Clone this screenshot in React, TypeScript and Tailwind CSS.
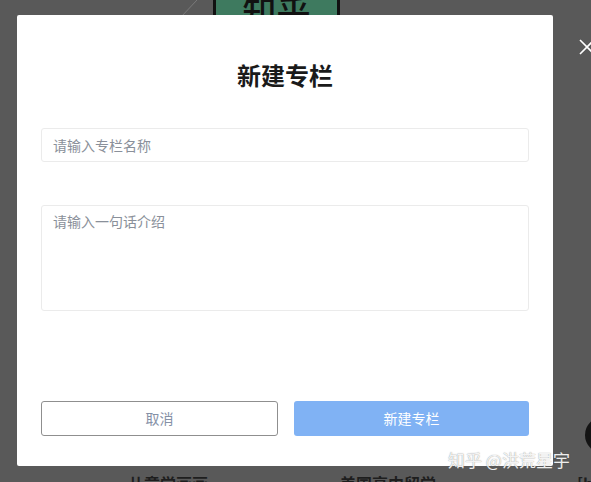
import React from "react";

const font = { fontFamily: '"Noto Sans CJK SC", "Noto Sans", sans-serif' };

export default function App() {
  return (
    <div
      className="relative w-[591px] h-[482px] overflow-hidden bg-[#595959] pt-[15px] pl-[17px]"
      style={font}
    >
      {/* backdrop content */}
      <svg className="absolute left-[178px] top-0" width="22" height="20" viewBox="0 0 22 20">
        <line x1="19" y1="0" x2="3" y2="17" stroke="#7a7a7a" strokeWidth="1" />
      </svg>
      <div className="absolute left-[213px] top-[-30px] w-[127px] h-[60px] bg-[#3e7a5f] border-x-[3px] border-[#111] flex justify-center items-end">
        <span className="text-[34px] leading-[34px] text-[#111] font-medium mb-[2px]">知乎</span>
      </div>
      <div className="absolute left-[128px] top-[473px] text-[16px] leading-[20px] font-bold text-[#1e1e1e] whitespace-nowrap">
        儿童学画画
      </div>
      <div className="absolute left-[340px] top-[473px] text-[16px] leading-[20px] font-bold text-[#1e1e1e] whitespace-nowrap">
        美国高中留学
      </div>
      <div className="absolute left-[577px] top-[473px] text-[16px] leading-[20px] font-bold text-[#1e1e1e] whitespace-nowrap">
        [b
      </div>
      <div className="absolute left-[585px] top-[417px] w-[36px] h-[36px] rounded-full bg-[#141414]" />

      {/* close */}
      <svg className="absolute left-[579px] top-[39px]" width="16" height="16" viewBox="0 0 16 16">
        <path d="M1 1 L15 15 M15 1 L1 15" stroke="#ffffff" strokeWidth="1.6" fill="none" />
      </svg>

      {/* modal */}
      <div className="relative z-10 w-[536px] bg-white rounded-[2px] px-6 pt-[44px] pb-[30px] flex flex-col">
        <h1 className="text-center text-[24px] leading-[32px] font-bold text-[#1a1a1a]">新建专栏</h1>
        <div className="mt-[37px] h-[34px] border border-[#ebebeb] rounded-[3px] px-[11px] flex items-center text-[14px] text-[#8a909a]">
          请输入专栏名称
        </div>
        <div className="mt-[43px] h-[106px] border border-[#ebebeb] rounded-[3px] px-[11px] pt-[5px] text-[14px] leading-[20px] text-[#8a909a]">
          请输入一句话介绍
        </div>
        <div className="mt-[90px] flex gap-4">
          <div className="flex-1 h-[35px] border border-[#8f8f8f] rounded-[3px] flex items-center justify-center text-[14px] text-[#8590a6]">
            取消
          </div>
          <div className="flex-1 h-[35px] bg-[#80b2f4] rounded-[3px] flex items-center justify-center text-[14px] text-white">
            新建专栏
          </div>
        </div>
      </div>

      {/* watermark */}
      <div
        className="absolute z-20 left-[448px] top-[449px] text-[17px] leading-[22px] text-white/90 whitespace-nowrap"
        style={{ textShadow: "0 0 1px rgba(90,90,90,0.8)" }}
      >
        知乎 @洪荒星宇
      </div>
    </div>
  );
}
